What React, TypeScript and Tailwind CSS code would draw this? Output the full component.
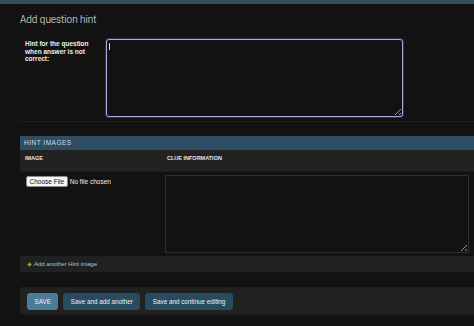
import React from "react";

// ------------------ Botones del formulario ------------------
const SubmitButton = ({ label, primary = false }: { label: string; primary?: boolean }) => (
  <button
    type="button"
    className={
      "h-[17px] rounded-[3px] px-[7.5px] text-[6.3px] leading-[17px] text-[#f2f2f2] " +
      (primary ? "bg-[#4a7c98] uppercase" : "bg-[#294b5f]")
    }
  >
    {label}
  </button>
);

export default function App() {
  return (
    <div className="h-[326px] w-[474px] overflow-hidden bg-[#121212] font-['Liberation_Sans',Arial,sans-serif] text-[#eeeeee]">
      {/* barra superior */}
      <div className="h-[4px] bg-[#34505f]" />

      <div className="pl-[20px]">
        <h1 className="pt-[9px] font-['Roboto',sans-serif] text-[10px] font-light leading-[14px] text-[#eeeeee]">
          Add question hint
        </h1>

        {/* Campo principal */}
        <div className="mt-[12px] flex border-b border-[#1f1f1f] pb-[4px]">
          <label className="w-[86px] shrink-0 pl-[5px] pr-[4px] pt-[1px] text-[6.5px] font-bold leading-[7.5px] text-[#f0f0f0]">
            Hint for the question when answer is not correct:
          </label>
          <div className="relative">
            <textarea
              className="block h-[78px] w-[297px] resize-y rounded-[3px] border border-[#a3abdc] bg-[#121212] shadow-[0_0_0_1px_#28325c] outline-none"
              defaultValue=""
            />
            <span className="absolute left-[3px] top-[4px] h-[7px] w-px bg-[#d8d8d8]" />
          </div>
        </div>

        {/* Grupo de imágenes */}
        <div className="mt-[14px]">
          <h2 className="h-[14px] bg-[#2d4e64] pl-[4px] text-[6.5px] leading-[14px] tracking-[0.5px] text-[#d4dde3]">
            HINT IMAGES
          </h2>
          <div className="grid h-[21px] grid-cols-[145px_1fr] bg-[#222222] pt-[5px] text-[5.5px] font-bold leading-[7px] text-[#e6e6e6]">
            <div className="pl-[5px]">IMAGE</div>
            <div className="pl-[2px]">CLUE INFORMATION</div>
          </div>
          <div className="grid grid-cols-[145px_1fr] border-t border-[#1a1a1a] pb-[3px]">
            <div className="flex items-center gap-[2px] self-start pl-[6px] pt-[4px]">
              <button
                type="button"
                className="h-[11px] rounded-[2px] border border-[#8a8a8a] bg-[#f4f4f4] px-[2.5px] text-[6.5px] leading-[9px] text-[#111]"
              >
                Choose File
              </button>
              <span className="text-[6.5px] text-[#f0f0f0]">No file chosen</span>
            </div>
            <div className="pt-[3px]">
              <textarea
                className="block h-[78px] w-[304px] resize-y border border-[#303030] bg-[#121212] outline-none"
                defaultValue=""
              />
            </div>
          </div>
          <div className="flex h-[16px] items-center gap-[2px] bg-[#212121] pl-[7px] text-[6px] text-[#a7c8dc]">
            <svg width="5" height="5" viewBox="0 0 10 10">
              <path d="M5 1v8M1 5h8" stroke="#70bf2b" strokeWidth="2.6" />
            </svg>
            <span>Add another Hint image</span>
          </div>
        </div>

        {/* Fila de envío */}
        <div className="mt-[15px] flex h-[28px] items-start gap-[5px] rounded-l-[3px] border-b border-[#1c1c1c] bg-[#212121] pl-[7px] pt-[6px]">
          <SubmitButton label="Save" primary />
          <SubmitButton label="Save and add another" />
          <SubmitButton label="Save and continue editing" />
        </div>
      </div>
    </div>
  );
}
